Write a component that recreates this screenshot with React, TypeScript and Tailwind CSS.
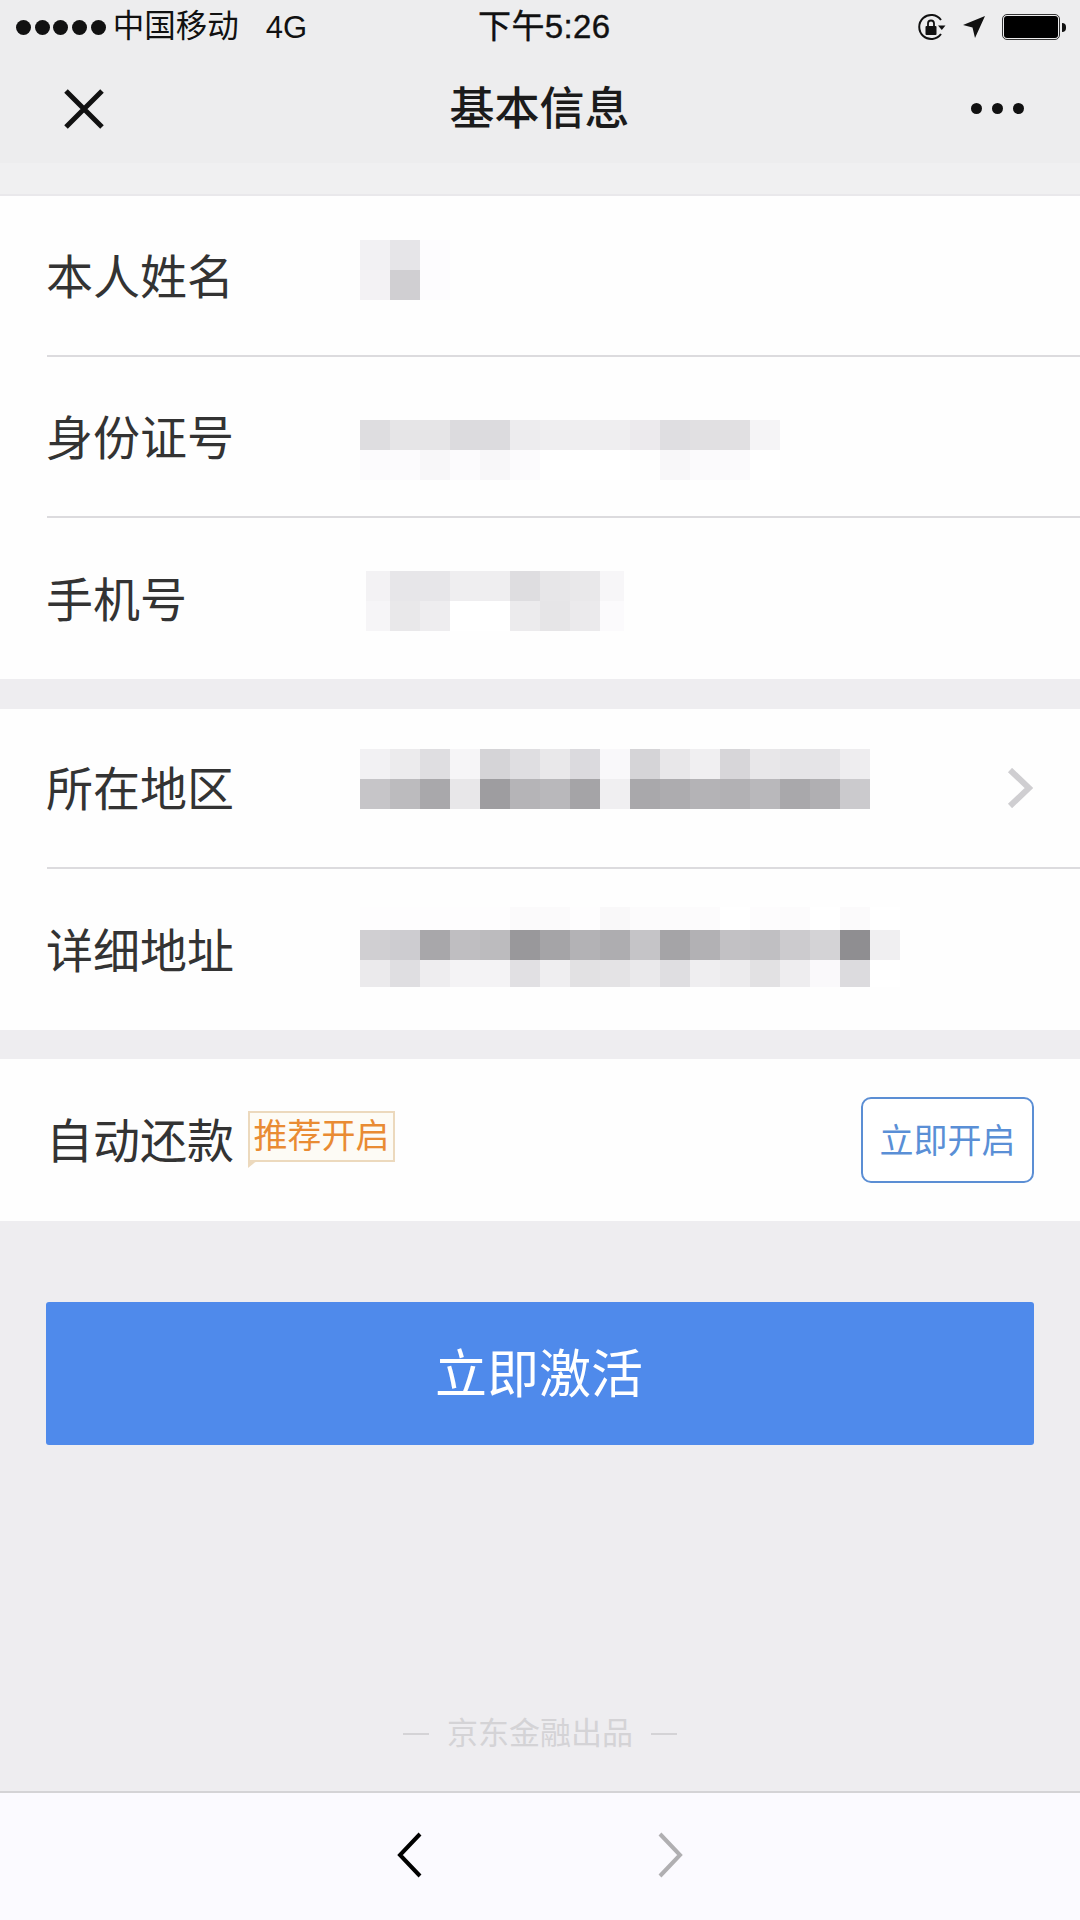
const FONT = "font-['Liberation_Sans','Noto_Sans_CJK_SC',sans-serif]";

// 打码区块：每行一组色值，每格 30px 宽
interface MosaicRow {
  h: number;
  cells: string[];
}

const nameRows: MosaicRow[] = [
  { h: 30, cells: ["f2f1f3", "e6e5e8", "fdfcfe"] },
  { h: 30, cells: ["f3f2f4", "d0cfd2", "fdfcfe"] },
];

const idRows: MosaicRow[] = [
  { h: 30, cells: ["dedde0", "e6e5e7", "e6e5e7", "dcdbde", "dcdbde", "edecee", "efeef0", "efeef0", "efeef0", "eceaed", "dfdee1", "e1e0e2", "e1e0e2", "f5f4f6"] },
  { h: 30, cells: ["fcfbfd", "fcfbfd", "f8f7f9", "fcfbfd", "f8f7f9", "fcfbfd", "ffffff", "ffffff", "ffffff", "fefefe", "f8f7f9", "fbfafc", "fbfafc", "ffffff"] },
];

const phoneRows: MosaicRow[] = [
  { h: 30, cells: ["f3f2f4", "e7e6e9", "e7e6e9", "efeef0", "efeef0", "dedde0", "e7e6e8", "e9e8ea", "f7f6f8"] },
  { h: 30, cells: ["f6f5f7", "e9e8ea", "eeedef", "ffffff", "ffffff", "ecebed", "e6e5e7", "ebeaec", "fbfafc"] },
];

const areaRows: MosaicRow[] = [
  { h: 30, cells: ["f2f1f3", "ecebed", "dfdee1", "f6f5f7", "d5d4d7", "dfdee1", "e9e8ea", "dbdade", "f9f8fa", "d5d4d7", "e8e7e9", "f0eff1", "d7d6d9", "e8e7e9", "e5e4e7", "e5e4e7", "eeedef"] },
  { h: 30, cells: ["c6c5c8", "bcbbbe", "a9a8ab", "e8e7e9", "9e9da0", "b5b4b7", "b9b8bb", "a5a4a7", "f0eff1", "a9a8ab", "adacaf", "b4b3b6", "b2b1b4", "b9b8bb", "a9a8ab", "b0afb2", "cbcacd"] },
];

const addressRows: MosaicRow[] = [
  { h: 23, cells: ["fefdfe", "fefdfe", "fefdfe", "fefdfe", "fefdfe", "fbfafb", "fbfafb", "fefdfe", "f9f8f9", "fcfbfc", "fcfbfc", "fcfbfc", "ffffff", "fdfcfd", "fcfbfc", "ffffff", "fbfafb", "ffffff"] },
  { h: 30, cells: ["d0cfd2", "cdccd0", "a8a7aa", "bfbec1", "bcbbbe", "99989b", "a5a4a7", "b3b2b5", "aeadb0", "c5c4c7", "a5a4a7", "b2b1b4", "c2c1c4", "c0bfc2", "cccbce", "d4d3d6", "8f8e91", "f0eff1"] },
  { h: 27, cells: ["ebeaec", "dfdee1", "eeedef", "f4f3f5", "f4f3f5", "e1e0e3", "efeef0", "e2e1e3", "e4e3e5", "eae9eb", "dfdee1", "efeef0", "ecebed", "e2e1e3", "eeedef", "faf9fb", "dcdbde", "ffffff"] },
];

function Mosaic({ rows, className = "" }: { rows: MosaicRow[]; className?: string }) {
  return (
    <div className={`flex flex-col ${className}`}>
      {rows.map((row, i) => (
        <div key={i} className="flex">
          {row.cells.map((c, j) => (
            <div key={j} className="w-[30px] shrink-0" style={{ height: row.h, backgroundColor: `#${c}` }} />
          ))}
        </div>
      ))}
    </div>
  );
}

function StatusBar() {
  return (
    <div className="h-[54px] relative flex items-center text-[#111] pl-[16px] pr-[14px]">
      <div className="flex gap-[3.7px]">
        {[0, 1, 2, 3, 4].map((i) => (
          <span key={i} className="w-[15px] h-[15px] rounded-full bg-[#111]" />
        ))}
      </div>
      <span className="text-[31.5px] leading-none ml-[7px]">中国移动</span>
      <span className="text-[31px] leading-none ml-[27px]">4G</span>
      <span className="absolute left-[478px] top-[9px] text-[33px] leading-[36px] tracking-[0.4px] [-webkit-text-stroke:0.4px_#111]">下午5:26</span>
      <div className="ml-auto flex items-center">
        <svg width="30" height="28" viewBox="0 0 30 28" fill="none">
          <path d="M25 21a12 12 0 1 1 0-14" stroke="#111" strokeWidth="2" />
          <path d="M22 12.5h7.5l-3.7 4.5z" fill="#111" />
          <rect x="9.5" y="13" width="11" height="9" rx="1" fill="#111" />
          <path d="M12 13v-2.5a3 3 0 0 1 6 0V13" stroke="#111" strokeWidth="1.8" />
        </svg>
        <svg width="24" height="24" viewBox="0 0 24 24" className="ml-[16px]">
          <path d="M23 1 13 23l-2.5-10.5L1 10z" fill="#111" />
        </svg>
        <div className="ml-[16px] w-[58px] h-[26px] rounded-[5px] border border-[#333] p-[1px]">
          <div className="w-full h-full rounded-[3px] bg-black" />
        </div>
        <div className="w-[4px] h-[9px] ml-[2px] rounded-r-full bg-[#111]" />
      </div>
    </div>
  );
}

function NavBar() {
  return (
    <div className="h-[109px] flex items-center justify-between pl-[64px] pr-[56px] relative">
      <svg width="40" height="40" viewBox="0 0 40 40">
        <path d="M2 2 38 38M38 2 2 38" stroke="#111" strokeWidth="5" fill="none" />
      </svg>
      <span className="absolute left-0 right-0 text-center text-[45px] leading-none font-medium text-[#1b1b1b] pt-[2px] pr-[1px]">基本信息</span>
      <div className="flex gap-[10px]">
        <span className="w-[11px] h-[11px] rounded-full bg-[#111]" />
        <span className="w-[11px] h-[11px] rounded-full bg-[#111]" />
        <span className="w-[11px] h-[11px] rounded-full bg-[#111]" />
      </div>
    </div>
  );
}

function Label({ children }: { children: string }) {
  return <span className="w-[314px] -ml-[1px] pt-[3px] shrink-0 text-[47px] leading-none text-[#333]">{children}</span>;
}

export default function App() {
  return (
    <div className={`w-[1080px] h-[1920px] flex flex-col bg-[#eeedf0] overflow-hidden ${FONT}`}>
      <div className="bg-[#ededee]">
        <StatusBar />
        <NavBar />
      </div>
      <div className="h-[33px] bg-[#f0f0f1] border-b-2 border-[#e9e8eb]" />

      {/* 基本信息 */}
      <div className="bg-[#fefefe] pl-[47px]">
        <div className="h-[161px] flex items-center border-b-2 border-[#dcdbde]">
          <Label>本人姓名</Label>
          <Mosaic rows={nameRows} className="mb-[12px]" />
        </div>
        <div className="h-[161px] flex items-center border-b-2 border-[#dcdbde]">
          <Label>身份证号</Label>
          <Mosaic rows={idRows} className="mt-[26px]" />
        </div>
        <div className="h-[161px] flex items-center">
          <Label>手机号</Label>
          <Mosaic rows={phoneRows} className="ml-[6px] mt-[4px] [&>div>div:first-child]:w-[24px] [&>div>div:last-child]:w-[24px]" />
        </div>
      </div>

      {/* 地区 */}
      <div className="mt-[30px] bg-[#fefefe] pl-[47px]">
        <div className="h-[160px] flex items-center border-b-2 border-[#dcdbde]">
          <Label>所在地区</Label>
          <Mosaic rows={areaRows} className="mb-[18px]" />
          <svg width="26" height="40" viewBox="0 0 26 40" className="ml-auto mr-[47px]">
            <path d="M3 2 22 20 3 38" stroke="#cfced1" strokeWidth="6" fill="none" />
          </svg>
        </div>
        <div className="h-[161px] flex items-center">
          <Label>详细地址</Label>
          <Mosaic rows={addressRows} className="mb-[6px]" />
        </div>
      </div>

      {/* 自动还款 */}
      <div className="mt-[29px] h-[162px] bg-[#fefefe] pl-[47px] pr-[46px] flex items-center">
        <span className="text-[47px] -ml-[1px] pt-[3px] leading-none text-[#333]">自动还款</span>
        <div className="relative ml-[14px] mb-[8px] w-[147px] h-[51px] flex items-center justify-center bg-[#fdfbf5] border-2 border-[#ecd9bd]">
          <span className="text-[34px] leading-none text-[#e98b33]">推荐开启</span>
          <svg width="10" height="8" viewBox="0 0 10 8" className="absolute left-[-2px] top-[47px]">
            <path d="M0 0h10L0 8z" fill="#ecd9bd" />
          </svg>
        </div>
        <button className="ml-auto w-[173px] h-[86px] pt-[2px] rounded-[10px] border-2 border-[#5b8ed4] text-[34px] leading-none text-[#5a8fd6] bg-white">
          立即开启
        </button>
      </div>

      <button className="mt-[81px] ml-[46px] mr-[46px] h-[143px] pt-[3px] pr-[2px] rounded-[3px] bg-[#4f8aeb] text-white text-[52px] leading-none">
        立即激活
      </button>

      <div className="mt-auto mb-[39px] flex items-center justify-center text-[31px] leading-[36px] text-[#d4d3d6]">
        <span className="w-[26px] h-[2px] bg-[#d4d3d6]" />
        <span className="mx-[18px]">京东金融出品</span>
        <span className="w-[26px] h-[2px] bg-[#d4d3d6]" />
      </div>

      {/* 底部前进后退 */}
      <div className="h-[129px] bg-[#fbfaff] border-t-2 border-[#d4d3d6] flex items-center justify-center gap-[236px] pb-[4px]">
        <svg width="25" height="46" viewBox="0 0 25 46">
          <path d="M23 2 3 23l20 21" stroke="#000" strokeWidth="4" fill="none" />
        </svg>
        <svg width="25" height="46" viewBox="0 0 25 46">
          <path d="M2 2 22 23 2 44" stroke="#b0afb2" strokeWidth="4" fill="none" />
        </svg>
      </div>
    </div>
  );
}
